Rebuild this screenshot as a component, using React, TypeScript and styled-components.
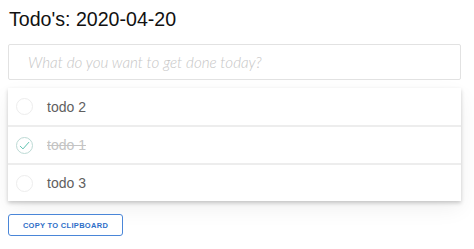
import styled, { createGlobalStyle } from "styled-components";

interface ITodo {
  text: string;
  done: boolean;
}

const todos: ITodo[] = [
  { text: "todo 2", done: false },
  { text: "todo 1", done: true },
  { text: "todo 3", done: false },
];

export default function App() {
  return (
    <Page>
      <GlobalStyle />
      <Title>Todo's: 2020-04-20</Title>
      <NewTodo placeholder="What do you want to get done today?" />
      <List>
        {todos.map((item, index) => (
          <Row key={index}>
            <Toggle $done={item.done}>
              {item.done && (
                <svg width="11" height="9" viewBox="0 0 12 10">
                  <path d="M1 5.5 L4.3 8.8 L11 1.2" fill="none" stroke="#5dc2af" strokeWidth="1.1" />
                </svg>
              )}
            </Toggle>
            <Label $done={item.done}>{item.text}</Label>
          </Row>
        ))}
      </List>
      <CopyButton>Copy to clipboard</CopyButton>
    </Page>
  );
}

const GlobalStyle = createGlobalStyle`
  body {
    margin: 0;
    background: #fff;
  }
`;

const Page = styled.div`
  display: flex;
  flex-direction: column;
  align-items: flex-start;
  padding: 7px 13px 0 8px;
  font-family: "Liberation Sans", Arial, sans-serif;
`;

const Title = styled.h1`
  margin: 0 0 0 1px;
  font-size: 19.6px;
  font-weight: 400;
  line-height: 24px;
  color: #111;
`;

const NewTodo = styled.input`
  box-sizing: border-box;
  width: 100%;
  height: 36px;
  margin-top: 13px;
  padding: 0 19px;
  border: 1px solid #e2e2e2;
  border-radius: 2px;
  font-family: Lato, sans-serif;
  font-size: 15.2px;
  font-style: italic;
  font-weight: 300;
  outline: none;
  &::placeholder {
    color: #c6c6c6;
  }
`;

const List = styled.div`
  width: 100%;
  margin-top: 8px;
  background: #fff;
  box-shadow: 0 2px 4px rgba(0, 0, 0, 0.2), 0 8px 20px rgba(0, 0, 0, 0.06);
`;

const Row = styled.div`
  display: flex;
  align-items: center;
  height: 38px;
  border-top: 2px solid #ededed;
  box-sizing: border-box;
  &:first-child {
    border-top: none;
    height: 37px;
  }
`;

const Toggle = styled.span<{ $done: boolean }>`
  box-sizing: border-box;
  display: flex;
  align-items: center;
  justify-content: center;
  width: 17px;
  height: 17px;
  margin-left: 8px;
  border-radius: 50%;
  border: 1px solid ${(p) => (p.$done ? "#bddad5" : "#ededed")};
`;

const Label = styled.span<{ $done: boolean }>`
  margin-left: 14px;
  font-size: 14px;
  color: ${(p) => (p.$done ? "#c4c4c4" : "#5f5f5f")};
  text-decoration: ${(p) => (p.$done ? "line-through" : "none")};
`;

const CopyButton = styled.button`
  margin-top: 13px;
  width: 115px;
  height: 22px;
  padding: 0;
  border: 1px solid #4a86d8;
  border-radius: 3px;
  background: #fff;
  color: #2f6fc8;
  font-family: "Liberation Sans", Arial, sans-serif;
  font-size: 7.5px;
  font-weight: 700;
  letter-spacing: 0.3px;
  text-transform: uppercase;
`;
